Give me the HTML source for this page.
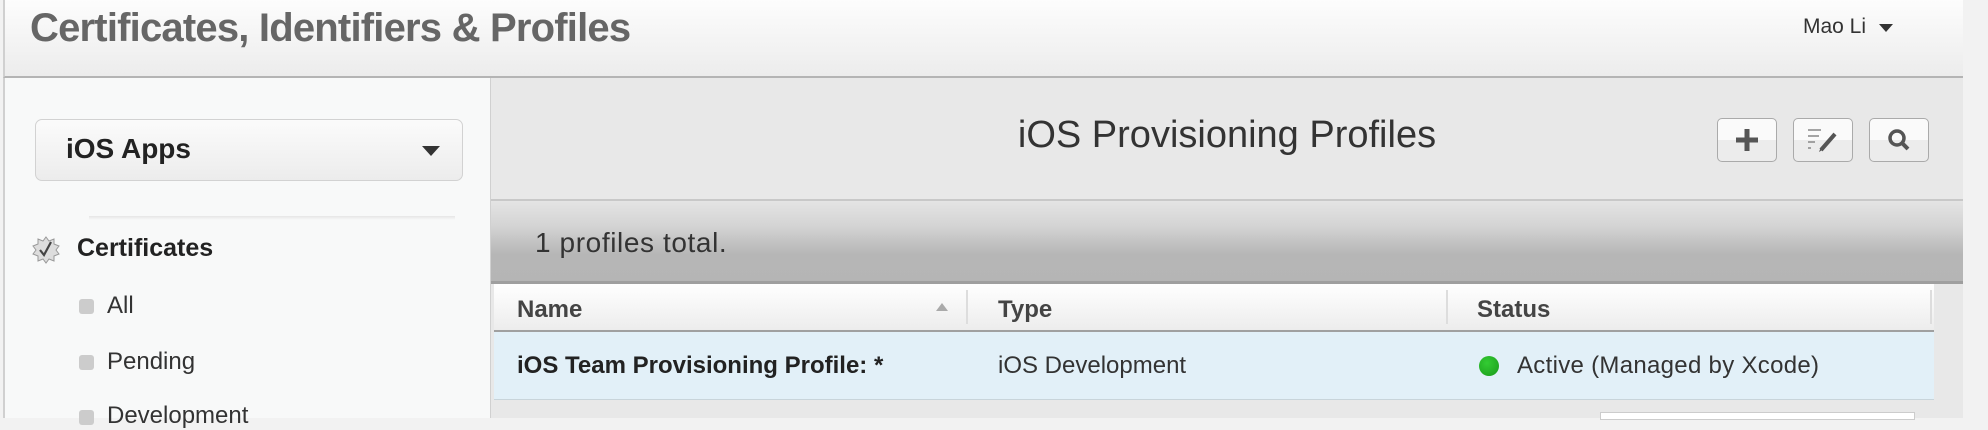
<!DOCTYPE html>
<html><head><meta charset="utf-8"><style>
*{margin:0;padding:0;box-sizing:border-box}
body{width:1988px;height:418px;overflow:hidden;background:#f2f2f2;font-family:"Liberation Sans",sans-serif;position:relative}
.a{position:absolute}
#hdr{left:3px;top:0;width:1960px;height:78px;background:linear-gradient(#fdfdfd,#ececec);border-bottom:2px solid #b4b4b4;border-left:2px solid #d0d0d0}
#side{left:3px;top:78px;width:488px;height:340px;background:#f8f9f9;border-left:2px solid #d0d0d0;border-right:1px solid #d0d0d0}
#main{left:491px;top:78px;width:1472px;height:340px;background:#e8e8e8}
.btn{width:60px;height:44px;border:1.5px solid #aaa;border-radius:5px;background:linear-gradient(#fafafa 50%,#ececec 50%)}
.txt{white-space:nowrap;color:#333}
</style></head><body>
<div class="a" id="hdr"></div>
<div class="a txt" style="left:30px;top:6px;font-size:40px;color:#666;font-weight:bold;letter-spacing:-0.8px">Certificates, Identifiers &amp; Profiles</div>
<div class="a txt" style="left:1803px;top:15px;font-size:21px;color:#333">Mao Li</div>
<div class="a" style="left:1879px;top:24px;width:0;height:0;border-left:7px solid transparent;border-right:7px solid transparent;border-top:8px solid #333"></div>

<div class="a" id="side"></div>
<div class="a" style="left:35px;top:119px;width:428px;height:62px;border:1.5px solid #d2d2d2;border-radius:7px;background:linear-gradient(#fbfbfb,#ececec)"></div>
<div class="a txt" style="left:66px;top:133px;font-size:28px;font-weight:bold;color:#222">iOS Apps</div>
<div class="a" style="left:422px;top:146px;width:0;height:0;border-left:9px solid transparent;border-right:9px solid transparent;border-top:10px solid #333"></div>
<div class="a" style="left:89px;top:216px;width:366px;height:4px;background:linear-gradient(#e6e6e6,#f8f9f9)"></div>
<svg class="a" style="left:32px;top:236px" width="28" height="28" viewBox="0 0 28 28"><polygon points="14,1 17,5 22,3 22,8 27,10 24,14 27,18 22,20 22,25 17,23 14,27 11,23 6,25 6,20 1,18 4,14 1,10 6,8 6,3 11,5" fill="#ddd" stroke="#999" stroke-width="1"/><path d="M8 14 L12 19 L19 6" fill="none" stroke="#444" stroke-width="2.2"/></svg>
<div class="a txt" style="left:77px;top:234px;font-size:25px;font-weight:bold;color:#222">Certificates</div>
<div class="a" style="left:79px;top:299px;width:15px;height:15px;border-radius:3px;background:#ccc"></div>
<div class="a txt" style="left:107px;top:292px;font-size:24px">All</div>
<div class="a" style="left:79px;top:355px;width:15px;height:15px;border-radius:3px;background:#ccc"></div>
<div class="a txt" style="left:107px;top:348px;font-size:24px">Pending</div>
<div class="a" style="left:79px;top:410px;width:15px;height:15px;border-radius:3px;background:#ccc"></div>
<div class="a txt" style="left:107px;top:402px;font-size:24px">Development</div>

<div class="a" id="main"></div>
<div class="a txt" style="left:491px;width:1472px;text-align:center;top:114px;font-size:38px;color:#333">iOS Provisioning Profiles</div>
<div class="a btn" style="left:1717px;top:118px"></div>
<svg class="a" style="left:1717px;top:118px" width="60" height="44"><path d="M30 11V33M19 22H41" stroke="#555" stroke-width="5"/></svg>
<div class="a btn" style="left:1793px;top:118px"></div>
<svg class="a" style="left:1793px;top:118px" width="60" height="44"><path d="M15 12H28M15 18H26M15 24H22M15 30H18" stroke="#888" stroke-width="1.6"/><path d="M28 32L42 16" stroke="#555" stroke-width="4"/><path d="M26 34L28 29L31 31Z" fill="#555"/></svg>
<div class="a btn" style="left:1869px;top:118px"></div>
<svg class="a" style="left:1869px;top:118px" width="60" height="44"><circle cx="28" cy="20" r="7" fill="none" stroke="#555" stroke-width="3.5"/><path d="M33 25L39 31" stroke="#555" stroke-width="4"/></svg>

<div class="a" style="left:491px;top:199px;width:1472px;height:2px;background:#c8c8c8"></div>
<div class="a" style="left:491px;top:201px;width:1472px;height:82px;background:linear-gradient(#e4e4e4,#d4d4d4 30%,#b6b6b6 65%,#b5b5b5)"></div>
<div class="a" style="left:491px;top:281px;width:1472px;height:3px;background:#9f9f9f"></div>
<div class="a txt" style="left:535px;top:227px;font-size:28px;color:#333;letter-spacing:0.6px">1 profiles total.</div>

<div class="a" style="left:494px;top:284px;width:1440px;height:47px;background:linear-gradient(#fff,#ececec)"></div>
<div class="a" style="left:494px;top:330px;width:1440px;height:2px;background:#a0a0a0"></div>
<div class="a txt" style="left:517px;top:296px;font-size:24px;font-weight:bold;color:#444">Name</div>
<div class="a" style="left:936px;top:303px;width:0;height:0;border-left:6px solid transparent;border-right:6px solid transparent;border-bottom:8px solid #aaa"></div>
<div class="a" style="left:966px;top:290px;width:2px;height:34px;background:#ddd"></div>
<div class="a txt" style="left:998px;top:296px;font-size:24px;font-weight:bold;color:#444">Type</div>
<div class="a" style="left:1446px;top:290px;width:2px;height:34px;background:#ddd"></div>
<div class="a txt" style="left:1477px;top:296px;font-size:24px;font-weight:bold;color:#444">Status</div>
<div class="a" style="left:1930px;top:290px;width:2px;height:34px;background:#ddd"></div>
<div class="a" style="left:494px;top:332px;width:1440px;height:68px;background:#e2f0f8;border-bottom:1px solid #c8d4da"></div>
<div class="a txt" style="left:517px;top:352px;font-size:24px;font-weight:bold;color:#222">iOS Team Provisioning Profile: *</div>
<div class="a txt" style="left:998px;top:352px;font-size:24px">iOS Development</div>
<div class="a" style="left:1479px;top:356px;width:20px;height:20px;border-radius:50%;background:radial-gradient(circle at 40% 35%,#3c3,#1a9a1a)"></div>
<div class="a txt" style="left:1517px;top:352px;font-size:24px;letter-spacing:0.3px">Active (Managed by Xcode)</div>
<div class="a" style="left:1600px;top:412px;width:315px;height:8px;background:#fff;border:1px solid #ccc"></div>
</body></html>
